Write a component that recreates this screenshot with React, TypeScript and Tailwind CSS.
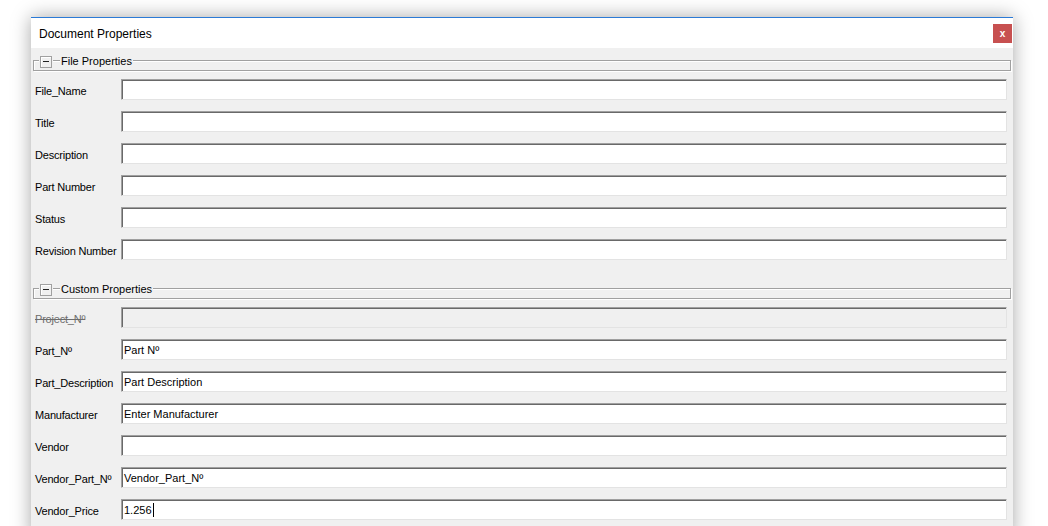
import React from 'react'

type Field = { label: string; value?: string; disabled?: boolean; caret?: boolean }

const fileFields: Field[] = [
  { label: 'File_Name' },
  { label: 'Title' },
  { label: 'Description' },
  { label: 'Part Number' },
  { label: 'Status' },
  { label: 'Revision Number' },
]

const customFields: Field[] = [
  { label: 'Project_Nº', disabled: true },
  { label: 'Part_Nº', value: 'Part Nº' },
  { label: 'Part_Description', value: 'Part Description' },
  { label: 'Manufacturer', value: 'Enter Manufacturer' },
  { label: 'Vendor' },
  { label: 'Vendor_Part_Nº', value: 'Vendor_Part_Nº' },
  { label: 'Vendor_Price', value: '1.256', caret: true },
]

function GroupHeader({ title }: { title: string }) {
  return (
    <div className="relative ml-[2px] mr-[2px] h-[11px] border border-[#a0a0a0] shadow-[inset_1px_1px_0_#ffffff,1px_1px_0_#ffffff]">
      <div className="absolute left-[5px] top-[-7px] flex h-[15px] items-center">
        <div className="flex h-[15px] items-center bg-[#f0f0f0] px-[1px]">
          <div className="flex h-[12px] w-[12px] items-center justify-center border border-[#a0a0a0] bg-[#f0f0f0] shadow-[inset_1px_1px_0_#ffffff]">
            <div className="h-[1px] w-[6px] bg-[#222]" />
          </div>
        </div>
        <div className="w-[7px]" />
        <span className="bg-[#f0f0f0] pl-[1px] pr-[1px] leading-[15px] text-black">{title}</span>
      </div>
    </div>
  )
}

function Row({ f }: { f: Field }) {
  return (
    <div className="flex h-[21px] items-center pl-[4px] pr-[6px]">
      <span
        className={
          'w-[86px] shrink-0 whitespace-nowrap pt-[3px] tracking-[-0.2px] ' +
          (f.disabled ? 'text-[#6d6d6d] line-through' : 'text-black')
        }
      >
        {f.label}
      </span>
      <div
        className={
          'flex h-[21px] flex-1 items-center border border-t-[#a0a0a0] border-l-[#a0a0a0] border-r-[#e3e3e3] border-b-[#e3e3e3] pl-[2px] pt-[1px] shadow-[inset_1px_1px_0_#696969] ' +
          (f.disabled ? 'bg-[#f0f0f0]' : 'bg-white')
        }
      >
        <span className="whitespace-nowrap text-black">{f.value}</span>
        {f.caret && <span className="ml-[1px] h-[14px] w-[1px] bg-black" />}
      </div>
    </div>
  )
}

export default function App() {
  return (
    <div
      className="h-[526px] w-[1048px] overflow-hidden bg-white text-[11px]"
      style={{ fontFamily: '"Liberation Sans", Arial, sans-serif' }}
    >
      <div className="ml-[31px] mt-[17px] w-[982px] border-t border-[#2b7ad6] bg-[#f0f0f0] shadow-[0_0_18px_rgba(0,0,0,0.35)]">
        <div className="flex h-[30px] items-center justify-between bg-white pl-[8px] pr-[1px]">
          <span className="pt-[1px] text-[12px] text-black">Document Properties</span>
          <div className="mt-[1px] flex h-[19px] w-[19px] items-center justify-center bg-[#c75050] text-[10px] font-bold leading-none text-white">
            x
          </div>
        </div>
        <div className="pb-[20px] pt-[12px]">
          <GroupHeader title="File Properties" />
          <div className="mt-[8px] flex flex-col gap-[11px]">
            {fileFields.map(f => (
              <Row key={f.label} f={f} />
            ))}
          </div>
          <div className="mt-[28px]">
            <GroupHeader title="Custom Properties" />
          </div>
          <div className="mt-[8px] flex flex-col gap-[11px]">
            {customFields.map(f => (
              <Row key={f.label} f={f} />
            ))}
          </div>
        </div>
      </div>
    </div>
  )
}
